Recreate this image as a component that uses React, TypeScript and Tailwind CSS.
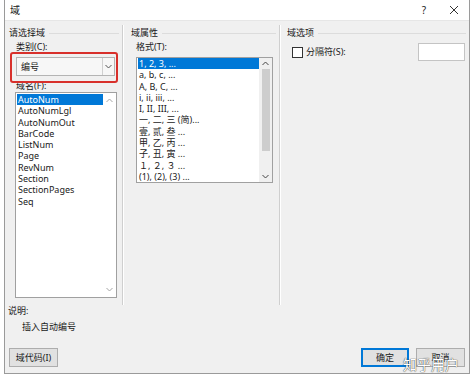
import React from "react";

const fieldNames = ["AutoNum", "AutoNumLgl", "AutoNumOut", "BarCode", "ListNum", "Page", "RevNum", "Section", "SectionPages", "Seq"];
const formats = ["1, 2, 3, ...", "a, b, c, ...", "A, B, C, ...", "i, ii, iii, ...", "I, II, III, ...", "一, 二, 三 (简)...", "壹, 贰, 叁 ...", "甲, 乙, 丙 ...", "子, 丑, 寅 ...", "１, ２, ３ ...", "(1), (2), (3) ..."];

function Chevron({ up = false, color = "#a6a6a6" }: { up?: boolean; color?: string }) {
  return (
    <svg width="7" height="5" viewBox="0 0 7 5">
      <polyline points={up ? "0.5,4 3.5,1 6.5,4" : "0.5,1 3.5,4 6.5,1"} fill="none" stroke={color} strokeWidth="1" />
    </svg>
  );
}

function Header({ label, pl }: { label: string; pl: string }) {
  return (
    <div className={`mt-[6px] h-[12px] flex items-center ${pl}`}>
      <span className="leading-[12px]">{label}</span>
      <div className="flex-1 h-px bg-[#dcdcdc] ml-[4px] mr-[3px]" />
    </div>
  );
}

function Divider() {
  return <div className="mt-[4px] w-[2px] border-l border-[#cfcfcf] bg-white" />;
}

export default function App() {
  return (
    <div className="w-[474px] h-[379px] bg-white pl-[4px] font-['Noto_Sans','Noto_Sans_CJK_SC',sans-serif] text-[9px] text-[#1a1a1a] relative">
      <div className="w-[466px] h-[374px] border border-t-0 border-[#9a9a9a] bg-[#f0f0f0] flex flex-col">
        {/* title bar */}
        <div className="h-[21px] bg-white border-b border-[#e6e6e6] flex items-center">
          <span className="pl-[5px] text-[10px]">域</span>
          <span className="ml-auto text-[10px] mr-[23px]">?</span>
          <svg width="10" height="10" viewBox="0 0 10 10" className="mr-[10px]">
            <path d="M1 1 L9 9 M9 1 L1 9" stroke="#333" strokeWidth="1" />
          </svg>
        </div>

        <div className="flex h-[284px]">
          {/* left column */}
          <div className="w-[117px] flex flex-col relative">
            <Header label="请选择域" pl="pl-[4px]" />
            <div className="mt-[3px] h-[10px] leading-[10px] pl-[11px]">类别(C):</div>
            <div className="mt-[5px] ml-[11px] w-[99px] h-[19px] border border-[#b4b4b4] bg-[#f7f7f7] flex items-center">
              <span className="pl-[4px] flex-1">编号</span>
              <div className="w-[12px] h-full border-l border-[#d0d0d0] flex items-center justify-center">
                <Chevron color="#555" />
              </div>
            </div>
            <div className="mt-[5px] h-[10px] leading-[10px] pl-[11px]">域名(F):</div>
            <div className="mt-[1px] ml-[10px] w-[102px] h-[206px] border border-[#a0a0a0] bg-white flex">
              <div className="flex-1 pt-[1px] pl-[1px]">
                {fieldNames.map((n, i) => (
                  <div key={n} className={`h-[11.3px] leading-[11.3px] pl-[1px] ${i === 0 ? "bg-[#0078d7] text-white" : ""}`}>
                    {n}
                  </div>
                ))}
              </div>
              <div className="w-[13px] flex flex-col items-center justify-between py-[5px]">
                <Chevron up />
                <Chevron />
              </div>
            </div>
            {/* red annotation box */}
            <div className="absolute left-[5px] top-[31px] w-[108px] h-[31px] border-2 border-[#d8302b] rounded-[3px]" />
          </div>
          <Divider />

          {/* middle column */}
          <div className="w-[155px] flex flex-col">
            <Header label="域属性" pl="pl-[7px]" />
            <div className="mt-[3px] h-[10px] leading-[10px] pl-[12px]">格式(T):</div>
            <div className="mt-[5px] ml-[12px] w-[137px] h-[126px] border border-[#a0a0a0] bg-white flex">
              <div className="flex-1 pl-[1px]">
                {formats.map((f, i) => (
                  <div key={f} className={`h-[11.3px] leading-[11.3px] pl-[1px] whitespace-nowrap ${i === 0 ? "bg-[#0078d7] text-white" : ""}`}>
                    {f}
                  </div>
                ))}
              </div>
              <div className="w-[13px] flex flex-col items-center bg-[#f0f0f0]">
                <div className="h-[11px] flex items-center"><Chevron up color="#444" /></div>
                <div className="w-[8px] h-[82px] bg-[#cdcdcd]" />
                <div className="flex-1" />
                <div className="h-[11px] flex items-center"><Chevron color="#444" /></div>
              </div>
            </div>
          </div>
          <Divider />

          {/* right column */}
          <div className="flex-1 flex flex-col">
            <Header label="域选项" pl="pl-[6px]" />
            <div className="mt-[4px] h-[18px] flex items-center pl-[11px]">
              <div className="w-[11px] h-[11px] border border-[#333] bg-white" />
              <span className="ml-[3px]">分隔符(S):</span>
              <div className="ml-auto mr-[4px] w-[47px] h-[18px] border border-[#c4c4c4] bg-white" />
            </div>
          </div>
        </div>

        {/* bottom */}
        <div className="h-[12px] leading-[12px] pl-[3px]">说明:</div>
        <div className="mt-[4px] h-[12px] leading-[12px] pl-[17px]">插入自动编号</div>
        <div className="mt-[15px] flex h-[19px]">
          <button className="ml-[4px] w-[49px] h-[19px] border border-[#adadad] bg-[#e1e1e1]">域代码(I)</button>
          <button className="ml-auto w-[48px] h-[19px] border-2 border-[#0078d7] bg-[#e1e1e1]">确定</button>
          <button className="ml-[7px] mr-[4px] w-[49px] h-[19px] border border-[#adadad] bg-[#e1e1e1]">取消</button>
        </div>
      </div>
      {/* watermark */}
      <div className="absolute left-[403px] top-[357px] text-[14px] leading-[16px] text-white [text-shadow:0_0_1px_#444,0_0_1px_#444]">
        知乎用户
      </div>
    </div>
  );
}
